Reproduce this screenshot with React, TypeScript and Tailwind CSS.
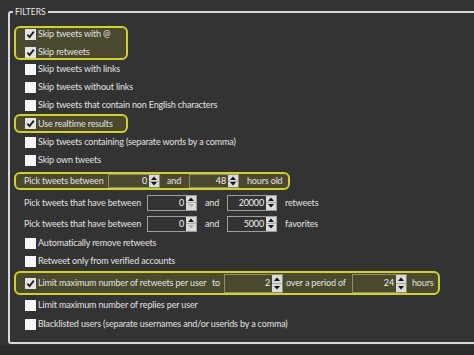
import React from "react";

function Check({ checked }: { checked?: boolean }) {
  return (
    <span
      className={
        checked
          ? "w-[11px] h-[11px] shrink-0 flex items-center justify-center bg-[#e4e4e4]"
          : "w-[11px] h-[11px] shrink-0 flex items-center justify-center bg-[#f6f6f6]"
      }
    >
      {checked && (
        <svg width="9" height="9" viewBox="0 0 9 9">
          <path d="M1.4 4.6 L3.6 7 L7.8 1.6" stroke="#1b1b1b" strokeWidth="1.8" fill="none" />
        </svg>
      )}
    </span>
  );
}

function Spin({ downDisabled }: { downDisabled?: boolean }) {
  return (
    <span className="w-[10px] shrink-0 self-stretch flex flex-col bg-[#dadada]">
      <span className="flex-1 flex items-center justify-center">
        <svg width="6" height="4" viewBox="0 0 6 4">
          <path d="M0 4 L3 0.5 L6 4Z" fill="#141414" />
        </svg>
      </span>
      <span className="h-px bg-[#a8a8a8]" />
      <span className="flex-1 flex items-center justify-center">
        <svg width="6" height="4" viewBox="0 0 6 4">
          <path d="M0 0 L3 3.5 L6 0Z" fill={downDisabled ? "#b0b0b0" : "#141414"} />
        </svg>
      </span>
    </span>
  );
}

function Num({
  value,
  cls,
  hl,
  downDisabled,
}: {
  value: string;
  cls: string;
  hl?: boolean;
  downDisabled?: boolean;
}) {
  return (
    <div
      className={
        (hl
          ? "border border-[#8e8d6b] bg-[#4a492e] "
          : "border border-[#9c9c9c] bg-[#333333] ") +
        "flex items-stretch shrink-0 " +
        cls
      }
    >
      <span className="flex-1 flex items-center justify-end pr-[2px] text-[#f2f2f2]">{value}</span>
      <Spin downDisabled={downDisabled} />
    </div>
  );
}

function Row({ label, checked }: { label: string; checked?: boolean }) {
  return (
    <div className="h-[18px] flex items-center gap-[2px] pl-[15px]">
      <Check checked={checked} />
      <span className="whitespace-nowrap">{label}</span>
    </div>
  );
}

function HRow({ label, checked }: { label: string; checked?: boolean }) {
  return (
    <div className="h-[18px] shrink-0 flex items-center gap-[2px]">
      <Check checked={checked} />
      <span className="whitespace-nowrap">{label}</span>
    </div>
  );
}

export default function App() {
  return (
    <div className="w-[474px] h-[355px] overflow-hidden bg-[#333333] flex flex-col font-['Lato',sans-serif] text-[9px] tracking-[-0.15px] leading-[12px] text-[#e2e2e2]">
      <fieldset className="ml-[8px] mt-[6px] border-2 border-r-0 border-[#d8d8d8] rounded-l-[3px] pt-[8px] pb-[9px] min-w-0">
        <legend className="ml-[3px] px-[2px] text-[8.5px] tracking-normal leading-[12px] text-[#e8e8e8]">FILTERS</legend>
        <div className="flex flex-col">
          <div className="ml-[4px] w-[114px] h-[34px] border-2 border-[#d0d02f] bg-[#4a492d] rounded-[6px] flex flex-col justify-center pl-[9px]">
            <HRow label="Skip tweets with @" checked />
            <HRow label="Skip retweets" checked />
          </div>
          <Row label="Skip tweets with links" />
          <Row label="Skip tweets without links" />
          <Row label="Skip tweets that contain non English characters" />
          <div className="ml-[4px] w-[114px] h-[19px] border-2 border-[#d0d02f] bg-[#4a492d] rounded-[6px] flex items-center pl-[9px]">
            <HRow label="Use realtime results" checked />
          </div>
          <Row label="Skip tweets containing (separate words by a comma)" />
          <Row label="Skip own tweets" />
          <div className="mt-[3px] ml-[4px] w-[276px] h-[18px] border-2 border-[#d0d02f] bg-[#4a492d] rounded-[6px] flex items-center pl-[8px]">
            <span className="w-[84px] shrink-0 whitespace-nowrap">Pick tweets between</span>
            <Num value="0" cls="w-[52px] h-[14px]" hl />
            <span className="w-[29px] shrink-0 pl-[7px]">and</span>
            <Num value="48" cls="w-[50px] h-[14px]" hl />
            <span className="ml-[8px] whitespace-nowrap">hours old</span>
          </div>
          <div className="mt-[2px] h-[21px] flex items-center pl-[14px]">
            <span className="w-[123px] shrink-0 whitespace-nowrap">Pick tweets that have between</span>
            <Num value="0" cls="w-[50px] h-[16px]" downDisabled />
            <span className="w-[30px] shrink-0 pl-[8px]">and</span>
            <Num value="20000" cls="w-[50px] h-[16px]" />
            <span className="ml-[8px] whitespace-nowrap">retweets</span>
          </div>
          <div className="h-[21px] flex items-center pl-[14px]">
            <span className="w-[123px] shrink-0 whitespace-nowrap">Pick tweets that have between</span>
            <Num value="0" cls="w-[50px] h-[16px]" downDisabled />
            <span className="w-[30px] shrink-0 pl-[8px]">and</span>
            <Num value="5000" cls="w-[50px] h-[16px]" />
            <span className="ml-[8px] whitespace-nowrap">favorites</span>
          </div>
          <Row label="Automatically remove retweets" />
          <Row label="Retweet only from verified accounts" />
          <div className="mt-[1px] ml-[4px] w-[426px] h-[24px] border-2 border-[#d0d02f] bg-[#4a492d] rounded-[6px] flex items-center pl-[9px]">
            <Check checked />
            <span className="ml-[2px] w-[186px] shrink-0 flex items-center whitespace-nowrap">
              <span>Limit maximum number of retweets per user</span>
              <span className="ml-auto pr-[4px]">to</span>
            </span>
            <Num value="2" cls="w-[59px] h-[19px]" hl />
            <span className="w-[69px] shrink-0 pl-[3px] whitespace-nowrap">over a period of</span>
            <Num value="24" cls="w-[55px] h-[19px]" hl />
            <span className="ml-[5px] whitespace-nowrap">hours</span>
          </div>
          <div className="mt-[1px]">
            <Row label="Limit maximum number of replies per user" />
          </div>
          <div className="mt-[1px]">
            <Row label="Blacklisted users (separate usernames and/or userids by a comma)" />
          </div>
        </div>
      </fieldset>
      <div className="mt-[2px] flex-1 bg-[#2b2b2b]" />
    </div>
  );
}
